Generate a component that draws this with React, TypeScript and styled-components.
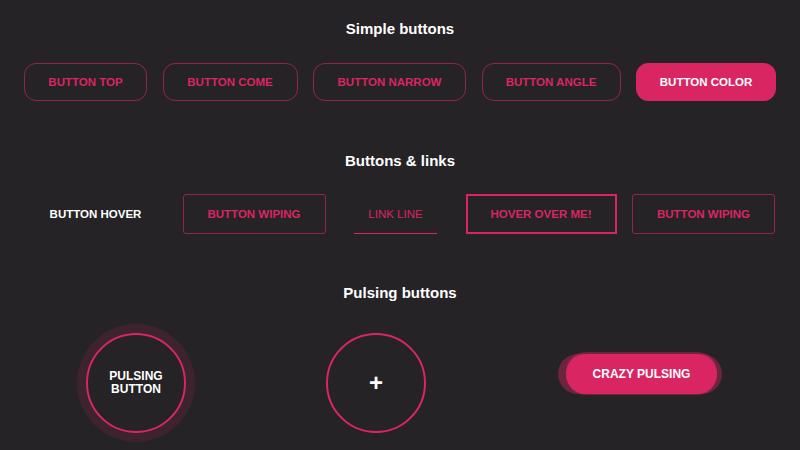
import React from 'react';
import styled, { createGlobalStyle, css } from 'styled-components';

const pink = '#d92663';

const GlobalStyle = createGlobalStyle`
  html, body {
    margin: 0;
    padding: 0;
    background: #252326;
    font-family: "Liberation Sans", Arial, sans-serif;
  }
  * { box-sizing: border-box; }
`;

const Page = styled.div`
  width: 800px;
  height: 450px;
  overflow: hidden;
  background: #252326;
  padding-top: 19px;
`;

const Section = styled.section<{ gap: number; after: number }>`
  display: flex;
  flex-direction: column;
  align-items: stretch;
  gap: ${({ gap }) => gap}px;
  margin-bottom: ${({ after }) => after}px;
`;

const Title = styled.h2`
  margin: 0;
  text-align: center;
  color: #ffffff;
  font-size: 15px;
  line-height: 20px;
  font-weight: 700;
`;

const Row = styled.div<{ right?: number }>`
  display: flex;
  justify-content: space-between;
  align-items: center;
  padding: 0 ${({ right }) => right ?? 24}px 0 24px;
`;

const PulseRow = styled.div`
  display: flex;
  justify-content: flex-start;
  align-items: center;
  gap: 140px;
  padding-left: 86px;
`;

const baseButton = css`
  font-family: "Liberation Sans", Arial, sans-serif;
  font-size: 11.5px;
  font-weight: 700;
  text-transform: uppercase;
  background: transparent;
  cursor: pointer;
  display: flex;
  align-items: center;
  justify-content: center;
  white-space: nowrap;
`;

const RoundButton = styled.button<{ filled?: boolean; w: number }>`
  ${baseButton};
  width: ${({ w }) => w}px;
  height: 38px;
  border-radius: 12px;
  border: 1px solid ${({ filled }) => (filled ? pink : 'rgba(217, 38, 99, 0.6)')};
  background: ${({ filled }) => (filled ? pink : 'transparent')};
  color: ${({ filled }) => (filled ? '#ffffff' : pink)};
`;

const BoxButton = styled.button<{ w: number; strong?: boolean; plain?: boolean }>`
  ${baseButton};
  width: ${({ w }) => w}px;
  height: 40px;
  border-radius: ${({ strong }) => (strong ? 0 : 3)}px;
  border: ${({ strong, plain }) =>
    plain ? 'none' : strong ? `2px solid ${pink}` : '1px solid rgba(217, 38, 99, 0.6)'};
  color: ${({ plain }) => (plain ? '#ffffff' : pink)};
`;

const LinkLine = styled.a`
  width: 109px;
  height: 40px;
  display: flex;
  align-items: center;
  justify-content: center;
  position: relative;
  color: ${pink};
  font-size: 11.5px;
  text-transform: uppercase;
  text-decoration: none;
  &::after {
    content: '';
    position: absolute;
    left: 13px;
    right: 13px;
    bottom: 0;
    height: 1px;
    background: ${pink};
  }
`;

const Circle = styled.button<{ halo?: boolean }>`
  ${baseButton};
  width: 100px;
  height: 100px;
  flex-shrink: 0;
  border-radius: 50%;
  border: 2px solid ${pink};
  color: #ffffff;
  line-height: 13px;
  font-size: 12px;
  text-align: center;
  box-shadow: ${({ halo }) => (halo ? '0 0 0 9px rgba(217, 38, 99, 0.13)' : 'none')};
`;

const Plus = styled.span`
  font-size: 24px;
  font-weight: 700;
  line-height: 1;
`;

const CrazyButton = styled.button`
  ${baseButton};
  width: 151px;
  height: 40px;
  flex-shrink: 0;
  margin-bottom: 18px;
  border: none;
  border-radius: 20px;
  background: ${pink};
  color: #ffffff;
  font-size: 12px;
  box-shadow: -8px 0 0 0 rgba(217, 38, 99, 0.4), 5px 0 0 0 rgba(217, 38, 99, 0.4),
    0 -2px 0 0 rgba(217, 38, 99, 0.4), 0 1px 0 0 rgba(217, 38, 99, 0.4);
`;

export default function App() {
  return (
    <Page>
      <GlobalStyle />
      <Section gap={24} after={50}>
        <Title>Simple buttons</Title>
        <Row>
          <RoundButton w={123}>Button top</RoundButton>
          <RoundButton w={135}>Button come</RoundButton>
          <RoundButton w={153}>Button narrow</RoundButton>
          <RoundButton w={139}>Button angle</RoundButton>
          <RoundButton w={140} filled>Button color</RoundButton>
        </Row>
      </Section>
      <Section gap={23} after={49}>
        <Title>Buttons &amp; links</Title>
        <Row right={25}>
          <BoxButton w={143} plain>Button hover</BoxButton>
          <BoxButton w={143}>Button wiping</BoxButton>
          <LinkLine href="#">Link line</LinkLine>
          <BoxButton w={151} strong>Hover over me!</BoxButton>
          <BoxButton w={143}>Button wiping</BoxButton>
        </Row>
      </Section>
      <Section gap={30} after={0}>
        <Title>Pulsing buttons</Title>
        <PulseRow>
          <Circle halo>
            Pulsing
            <br />
            button
          </Circle>
          <Circle>
            <Plus>+</Plus>
          </Circle>
          <CrazyButton>Crazy pulsing</CrazyButton>
        </PulseRow>
      </Section>
    </Page>
  );
}
